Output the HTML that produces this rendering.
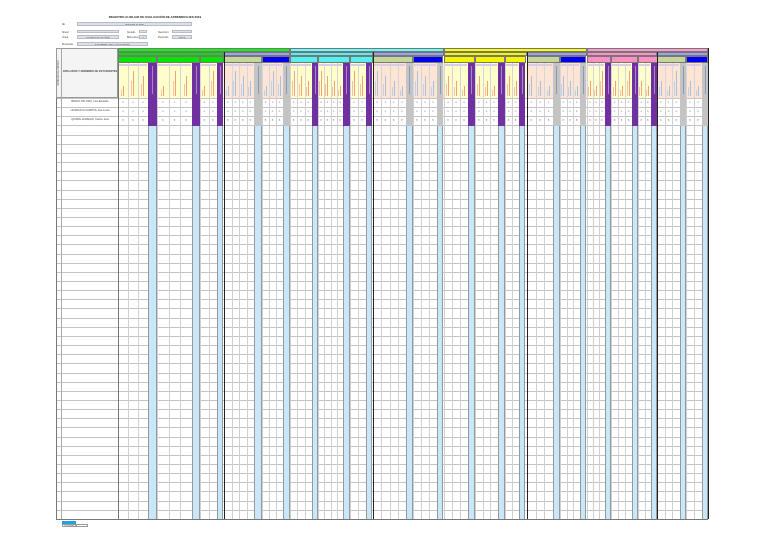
<!DOCTYPE html>
<html><head><meta charset="utf-8">
<style>
body{margin:0;width:768px;height:543px;background:#fff;position:relative;overflow:hidden;font-family:"Liberation Sans",sans-serif;}
.a{position:absolute;box-sizing:border-box;}
.t{font-size:3px;line-height:4px;color:#444;white-space:nowrap;text-align:center;overflow:hidden;}
.box{background:#dde0e8;border:0.5px solid #b8bcc8;}
</style></head><body>
<div class="a t" style="left:100px;top:15px;width:110px;font-weight:bold;font-size:3px;color:#222">REGISTRO AUXILIAR DE EVALUACIÓN DE APRENDIZAJES 2019</div>
<div class="a t" style="left:62px;top:22px;width:8px;text-align:left">IE</div>
<div class="a box t" style="left:77px;top:22px;width:115px;height:4px">INSTITUCION</div>
<div class="a t" style="left:62px;top:29.5px;width:10px;text-align:left">Nivel</div>
<div class="a box t" style="left:77px;top:29.5px;width:42px;height:3.5px">PRIMARIA</div>
<div class="a t" style="left:127px;top:29.5px;width:10px;text-align:left">Grado</div>
<div class="a box t" style="left:139px;top:29.5px;width:8px;height:3.5px">1</div>
<div class="a t" style="left:158px;top:29.5px;width:12px;text-align:left">Sección</div>
<div class="a box t" style="left:172px;top:29.5px;width:20px;height:3.5px">A</div>
<div class="a t" style="left:62px;top:35px;width:10px;text-align:left">Área</div>
<div class="a box t" style="left:77px;top:35px;width:42px;height:3.5px">COMUNICACIÓN</div>
<div class="a t" style="left:127px;top:35px;width:12px;text-align:left">Bimestre</div>
<div class="a box t" style="left:139px;top:35px;width:8px;height:3.5px">I</div>
<div class="a t" style="left:158px;top:35px;width:14px;text-align:left">Periodo</div>
<div class="a box t" style="left:172px;top:35px;width:20px;height:3.5px">2019</div>
<div class="a t" style="left:62px;top:42px;width:12px;text-align:left">Docente</div>
<div class="a box t" style="left:77px;top:42px;width:71px;height:4px">NOMBRE DEL DOCENTE</div>

<div id="g"></div>
<div class="a" style="left:56px;top:48px;width:62px;height:50px;background:#f4f4f4;border:0.5px solid #999"></div>
<div class="a" style="left:61px;top:48px;width:0.5px;height:471px;background:#aaa"></div>
<div class="a t" style="left:62px;top:70px;width:56px;font-weight:bold;font-size:2.6px">APELLIDOS Y NOMBRES DE ESTUDIANTES</div>
<div class="a t" style="left:40px;top:71px;width:38px;transform:rotate(-90deg);font-size:2.5px">NÚMERO DE ORDEN</div>
<div class="a t" style="left:62px;top:100px;width:56px;font-size:2.6px">BRAVO PALOMO, Luis Eduardo</div>
<div class="a t" style="left:62px;top:109px;width:56px;font-size:2.6px">HUARCAYA CAMPOS, Ana Lucía</div>
<div class="a t" style="left:62px;top:118px;width:56px;font-size:2.6px">QUISPE HUAMANI, Carlos José</div>

<div class="a" style="left:62px;top:521px;width:14px;height:2.5px;background:#1aa3e8"></div>
<div class="a t" style="left:62px;top:524px;width:14px;height:3px;border:0.5px solid #999;font-size:2px;line-height:2.5px">LEYENDA</div>
<div class="a" style="left:76px;top:524px;width:12px;height:3px;border:0.5px solid #999"></div>

<script>
var g=document.getElementById('g');
function d(x,y,w,h,bg,extra){var e=document.createElement('div');e.className='a';e.style.cssText='left:'+x+'px;top:'+y+'px;width:'+w+'px;height:'+h+'px;background:'+bg+';'+(extra||'');g.appendChild(e);return e;}
var TOP=48,HB=98,R1=125.5,BOT=519,RH=9.15;
for(var y=HB;y<=BOT+0.1;y+=RH){d(56,y,652,0.5,'#c4c4c4');}
var S=[
 {c:'#00ff00',c2:'#00e600',A:[118,224],P:[[148,157],[192,200],[217,223]],subs:[118,157,200,223],B:[224,290],G:[[254,262],[283,290]],bs:[224,262,290],na:[3,3,2],nb:[4,3]},
 {c:'#66ffff',c2:'#55f0f0',A:[290,373],P:[[312,318],[343,350],[366,372]],subs:[290,318,350,372],B:[373,444],G:[[406,413],[437,443]],bs:[373,413,443],na:[3,4,2],nb:[4,3]},
 {c:'#ffff00',c2:'#f5f500',A:[444,527],P:[[468,475],[498,505],[519,525]],subs:[444,475,505,525],B:[527,587],G:[[553,560],[580,586]],bs:[527,560,586],na:[3,3,2],nb:[3,3]},
 {c:'#ff99cc',c2:'#ff8fc6',A:[587,657],P:[[605,611],[632,638],[651,657]],subs:[587,611,638,657],B:[657,708],G:[[680,686],[702,708]],bs:[657,686,708],na:[3,3,2],nb:[3,2]}];
S.forEach(function(s,si){
 var x0=s.A[0],x1=s.B[1];
 d(x0,TOP,x1-x0,4,s.c,'border:0.5px solid #777');
 d(s.A[0],52,s.A[1]-s.A[0],3.5,s.c2,'border:0.5px solid #777');
 d(s.B[0],52,s.B[1]-s.B[0],3.5,'#a0a0f0','border:0.5px solid #777');
 for(var i=0;i<3;i++){d(s.subs[i],55.5,s.subs[i+1]-s.subs[i]+(i==2?1:0),7.5,s.c2,'border:0.5px solid #777');}
 d(s.bs[0],55.5,s.bs[1]-s.bs[0],7.5,'#c4d79b','border:0.5px solid #777');
 d(s.bs[1],55.5,s.bs[2]-s.bs[1],7.5,'#0000ee','border:0.5px solid #777');
 d(s.A[0],63,s.A[1]-s.A[0],35,'#ffffcc');
 d(s.B[0],63,s.B[1]-s.B[0],35,'#fde4d4');
 function cols(a,b,n,red){var w=(b-a)/n;for(var k=0;k<n;k++){var cx=a+k*w;d(cx,HB,0.5,BOT-HB,'#cfcfcf');d(cx,63,0.5,35,'#d6d6d6');
   var hh=10+((k*7+si*3)%4)*5;d(cx+w/2,96-hh,0.5,hh,red?'#f4a080':'#a8c0e0');
   d(cx+w/2-2,96-hh*0.6,0.4,hh*0.6,red?'#f8c0a8':'#c0d0e8');
   for(var r=0;r<3;r++){var e=d(cx,HB+r*RH+3,w,3,'transparent');e.className='a t';e.style.color='#888';e.style.fontSize='2.3px';e.textContent=r==2?'B':'A';}}
   d(a+1,64,b-a-2,1.6,'#d8cce6');}
 for(var i=0;i<3;i++){var p=s.P[i];cols(s.subs[i],p[0],s.na[i],true);}
 cols(s.bs[0],s.G[0][0],s.nb[0],false);cols(s.bs[1],s.G[1][0],s.nb[1],false);
 s.P.forEach(function(p){d(p[0],63,p[1]-p[0],R1-63,'#7030a0');d(p[0],R1,p[1]-p[0],BOT-R1,'#c9e7fb','border-left:0.5px solid #999;border-right:0.5px solid #999');d(p[0]+(p[1]-p[0])/2-0.3,66,0.5,28,'#a58ac8');});
 s.G.forEach(function(p){d(p[0],63,p[1]-p[0],R1-63,'#c4c4c4');d(p[0],R1,p[1]-p[0],BOT-R1,'#c9e7fb','border-left:0.5px solid #999;border-right:0.5px solid #999');d(p[0]+(p[1]-p[0])/2-0.3,66,0.5,28,'#8898b8');});
 d(s.A[1]-0.5,TOP+4,1.3,BOT-TOP-4,'#222');
 d(s.B[1]-0.5,TOP,1.3,BOT-TOP,'#222');
});
d(118,TOP,0.6,BOT-TOP,'#777');
d(56,TOP,0.6,BOT-TOP,'#777');
d(56,BOT,652,0.6,'#777');
</script>
</body></html>
